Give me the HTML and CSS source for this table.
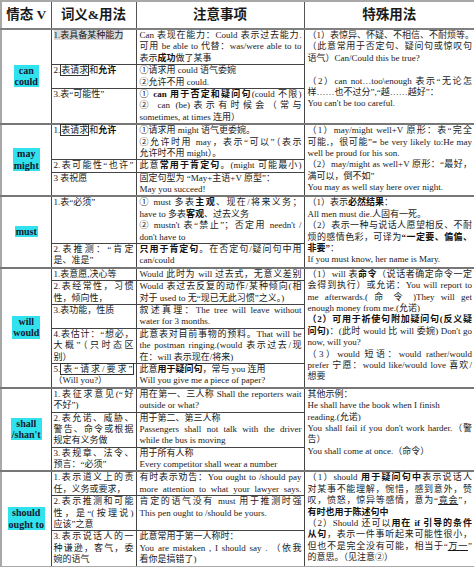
FILE: index.html
```html
<!DOCTYPE html>
<html lang="zh">
<head>
<meta charset="utf-8">
<link rel="stylesheet" href="styles.css">
</head>
<body>
<table class="grid">
<colgroup><col class="c1"><col class="c2"><col class="c3"><col class="c4"></colgroup>
<thead>
<tr><th>情态 V</th><th>词义&amp;用法</th><th>注意事项</th><th>特殊用法</th></tr>
</thead>
<tbody>
<tr class="first">
<td rowspan="3" class="modal"><span class="hl">can<br>could</span></td>
<td class="use"><span class="l e"><span class="gray">1.表具备某种能力</span></span></td>
<td class="note"><span class="l">Can 表现在能力：Could 表示过去能力.</span><span class="l">可用 be able to 代替：was/were able to to</span><span class="l e">表示<b>成功</b>做了某事</span></td>
<td rowspan="3" class="sp"><span class="l">（1）表惊异、怀疑、不相信、不耐烦等。</span><span class="l">（此意常用于否定句、疑问句或惊叹句</span><span class="l e">语气）Can/Could this be true?</span><span class="l e"></span><span class="l">（2）can not…too\enough 表示“无论怎</span><span class="l e">样……也不过分”,“越……越好”：</span><span class="l e">You can't be too careful.</span></td>
</tr>
<tr><td class="use"><span class="l e">2.<span class="box">表请求</span>和<b>允许</b></span></td><td class="note"><span class="l e">①请求用 could 语气委婉</span><span class="l e">②允许不用 could.</span></td></tr>
<tr><td class="use"><span class="l e">3.表“可能性”</span></td><td class="note"><span class="l">① <b>can 用于否定和疑问句</b>(could 不限)</span><span class="l">② can (be)表示有时候会（常与</span><span class="l e">sometimes, at times 连用）</span></td></tr>

<tr class="first">
<td rowspan="3" class="modal"><span class="hl">may<br>might</span></td>
<td class="use"><span class="l e">1.<span class="box">表请求</span>和<b>允许</b></span></td>
<td class="note"><span class="l e">①请求用 might 语气更委婉。</span><span class="l">②允许时用 may，表示“可以”（表示</span><span class="l e">允许时不用 might）。</span></td>
<td rowspan="3" class="sp"><span class="l">（1）may/might well+V 原形：表“完全</span><span class="l">可能,，很可能”= be very likely to:He may</span><span class="l e">well be proud for his son.</span><span class="l">（2）may/might as well+V 原形：“最好，</span><span class="l e">满可以，倒不如”</span><span class="l e">You may as well stay here over night.</span></td>
</tr>
<tr><td class="use"><span class="l">2.表可能性“也许”</span></td><td class="note"><span class="l">此意<b>常用于肯定句</b>。(might 可能最小)</span></td></tr>
<tr><td class="use"><span class="l e">3 表祝愿</span></td><td class="note"><span class="l e">固定句型为 “May+主语+V 原型”：</span><span class="l e">May you succeed!</span></td></tr>

<tr class="first">
<td rowspan="2" class="modal"><span class="hl">must</span></td>
<td class="use"><span class="l e">1.表“必须”</span></td>
<td class="note"><span class="l">① must 多表<b>主观</b>、现在/将来义务；</span><span class="l e">have to 多表<b>客观</b>、过去义务</span><span class="l">② mustn't 表“禁止”；否定用 needn't /</span><span class="l e">don't have to</span></td>
<td rowspan="2" class="sp"><span class="l e">（1）表示<b>必然结果</b>：</span><span class="l e">All men must die.人固有一死。</span><span class="l">（2）表示一种与说话人愿望相反、不耐</span><span class="l">烦的感情色彩，可译为<b>“一定要、偏偏、</b></span><span class="l e"><b>非要”</b>：</span><span class="l e">If you must know, her name is Mary.</span></td>
</tr>
<tr><td class="use"><span class="l">2.表推测：“肯定</span><span class="l e">是、准是”</span></td><td class="note"><span class="l"><b>只用于肯定句</b>。在否定句/疑问句中用</span><span class="l e">can/could</span></td></tr>

<tr class="first">
<td rowspan="5" class="modal"><span class="hl">will<br>would</span></td>
<td class="use"><span class="l e">1.表意愿,决心等</span></td>
<td class="note"><span class="l">Would 此时为 will 过去式，无意义差别</span></td>
<td rowspan="5" class="sp"><span class="l">（1）will 表<b>命令</b>（说话者确定命令一定</span><span class="l">会得到执行）或允诺：You will report to</span><span class="l">me afterwards.( 命 令 )They will get</span><span class="l e">enough money from me.(允诺)</span><span class="l"><b>（2）可用于祈使句附加疑问句(反义疑</b></span><span class="l"><b>问句)</b>：(此时 would 比 will 委婉) Don't go</span><span class="l e">now, will you?</span><span class="l">（3）would 短语：would rather/would</span><span class="l">prefer 宁愿：would like/would love 喜欢/</span><span class="l e">想要</span></td>
</tr>
<tr><td class="use"><span class="l">2.表经常性，习惯</span><span class="l e">性，倾向性，</span></td><td class="note"><span class="l">Would 表过去反复的动作/某种倾向(相</span><span class="l e">对于 used to 无“现已无此习惯”之义。)</span></td></tr>
<tr><td class="use"><span class="l e">3.表功能，性质</span></td><td class="note"><span class="l">叙述真理：The tree will leave without</span><span class="l e">water for 3 months.</span></td></tr>
<tr><td class="use"><span class="l">4.表估计：“想必，</span><span class="l">大概”（只时态区</span><span class="l e">别）</span></td><td class="note"><span class="l">此意表对目前事物的预料。That will be</span><span class="l">the postman ringing.(would 表示过去/现</span><span class="l e">在：will 表示现在/将来)</span></td></tr>
<tr><td class="use"><span class="l">5.<span class="box">表“请求/要求”</span></span><span class="l e">（Will you?）</span></td><td class="note"><span class="l e">此意<b>用于疑问句</b>，常与 you 连用</span><span class="l e">Will you give me a piece of paper?</span></td></tr>

<tr class="first">
<td rowspan="3" class="modal"><span class="hl">shall<br>/shan't</span></td>
<td class="use"><span class="l">1.表征求意见(“好</span><span class="l e">不好”)</span></td>
<td class="note"><span class="l">用在第一、三人称 Shall the reporters wait</span><span class="l e">outside or what?</span></td>
<td rowspan="3" class="sp"><span class="l e">其他示例：</span><span class="l e">He shall have the book when I finish</span><span class="l e">reading.(允诺)</span><span class="l">You shall fail if you don't work harder.（警</span><span class="l e">告）</span><span class="l e">You shall come at once.（命令）</span></td>
</tr>
<tr><td class="use"><span class="l">2.表允诺、威胁、</span><span class="l">警告、命令或根据</span><span class="l e">规定有义务做</span></td><td class="note"><span class="l e">用于第二、第三人称</span><span class="l">Passengers shall not talk with the driver</span><span class="l e">while the bus is moving</span></td></tr>
<tr><td class="use"><span class="l">3.表规章、法令、</span><span class="l e">预言：“必须”</span></td><td class="note"><span class="l e">用于所有人称</span><span class="l e">Every competitor shall wear a number</span></td></tr>

<tr class="first">
<td rowspan="3" class="modal"><span class="hl">should<br>ought to</span></td>
<td class="use"><span class="l">1.表示道义上的责</span><span class="l e">任，义务或要求，</span></td>
<td class="note"><span class="l">有时表示劝告：You ought to /should pay</span><span class="l">more attention to what your lawyer says.</span></td>
<td rowspan="3" class="sp"><span class="l">（1）should <b>用于疑问句中</b>表示说话人</span><span class="l">对某事不能理解，惋惜，感到意外，赞</span><span class="l">叹，愤怒，惊异等感情，意为“<u>竟会</u>”，</span><span class="l e"><b>有时也用于陈述句中</b></span><span class="l">（2）Should 还可以<b>用在 if 引导的条件</b></span><span class="l"><b>从句</b>，表示一件事听起来可能性很小，</span><span class="l">但也不是完全没有可能，相当于“<u>万一</u>”</span><span class="l e">的意思。（见注意②）</span></td>
</tr>
<tr><td class="use"><span class="l">2.表示推测和可能</span><span class="l">性，是“(按理说)</span><span class="l e">应该”之意</span></td><td class="note"><span class="l">肯定的语气没有 must 用于推测时强</span><span class="l e">This pen ought to /should be yours.</span></td></tr>
<tr><td class="use"><span class="l">3.表示说话人的一</span><span class="l">种谦逊，客气，委</span><span class="l e">婉的语气</span></td><td class="note"><span class="l e">此意常用于第一人称时：</span><span class="l">You are mistaken , I should say . （依我</span><span class="l e">看你是搞错了)</span></td></tr>
</tbody>
</table>
</body>
</html>
```
FILE: styles.css
```css
html, body {
  margin: 0;
  padding: 0;
  background: #ffffff;
}
.grid {
  width: 474px;
  table-layout: fixed;
  border-collapse: collapse;
  border: 2px solid #a8a8a8;
  font-family: "Liberation Serif", "Noto Sans CJK SC", serif;
  color: #1a1a1a;
}
.c1 { width: 50px; }
.c2 { width: 85px; }
.c3 { width: 168px; }
.c4 { width: 171px; }
th {
  height: 26px;
  padding: 0;
  font-size: 13.5px;
  line-height: 16px;
  font-weight: bold;
  text-align: center;
  vertical-align: middle;
  border: 1px solid #555555;
  border-bottom: 2px solid #808080;
  color: #1a1a1a;
}
td {
  font-size: 9px;
  line-height: 11.4px;
  padding: 0 2px 0 3px;
  vertical-align: top;
  border: 1px solid #444444;
  text-align: justify;
}
tr.first td {
  border-top: 2px solid #777777;
}
td.use {
  padding: 0 2px 0 2px;
}
.l {
  display: block;
  height: 11.4px;
  white-space: nowrap;
  text-align: justify;
  text-align-last: justify;
}
.l.e {
  text-align: left;
  text-align-last: left;
}
td.modal {
  text-align: center;
  vertical-align: middle;
  padding: 0;
}
.hl {
  display: inline-block;
  background: #30e2ee;
  font-weight: bold;
  font-size: 10px;
  line-height: 11.4px;
  color: #101830;
  padding: 0 1px;
}
.gray {
  background: #d8d8d8;
}
.box {
  border: 1px solid #333333;
}
b {
  font-weight: bold;
  color: #111111;
}
u {
  text-decoration: underline;
}
```
